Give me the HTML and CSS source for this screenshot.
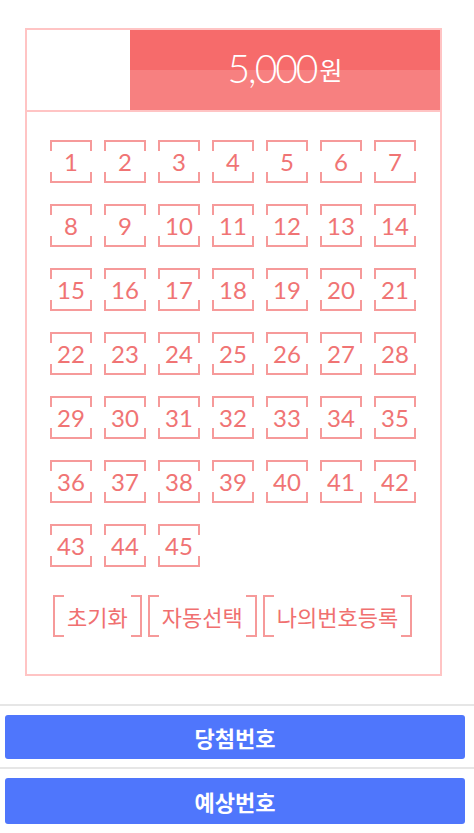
FILE: index.html
```html
<!DOCTYPE html>
<html lang="ko">
<head>
    <meta charset="UTF-8">
    <meta name="viewport" content="width=device-width, initial-scale=1.0">
    <title>로또 번호 선택</title>
    <link rel="stylesheet" href="styles.css">
</head>
<body>

    <div class="ticket">
        <div class="ticket-head">
            <div class="head-blank"></div>
            <div class="head-price"><span class="price-num">5,000</span><span class="price-unit">원</span></div>
        </div>
        <div class="board">
            <div class="num">1</div>
            <div class="num">2</div>
            <div class="num">3</div>
            <div class="num">4</div>
            <div class="num">5</div>
            <div class="num">6</div>
            <div class="num">7</div>
            <div class="num">8</div>
            <div class="num">9</div>
            <div class="num">10</div>
            <div class="num">11</div>
            <div class="num">12</div>
            <div class="num">13</div>
            <div class="num">14</div>
            <div class="num">15</div>
            <div class="num">16</div>
            <div class="num">17</div>
            <div class="num">18</div>
            <div class="num">19</div>
            <div class="num">20</div>
            <div class="num">21</div>
            <div class="num">22</div>
            <div class="num">23</div>
            <div class="num">24</div>
            <div class="num">25</div>
            <div class="num">26</div>
            <div class="num">27</div>
            <div class="num">28</div>
            <div class="num">29</div>
            <div class="num">30</div>
            <div class="num">31</div>
            <div class="num">32</div>
            <div class="num">33</div>
            <div class="num">34</div>
            <div class="num">35</div>
            <div class="num">36</div>
            <div class="num">37</div>
            <div class="num">38</div>
            <div class="num">39</div>
            <div class="num">40</div>
            <div class="num">41</div>
            <div class="num">42</div>
            <div class="num">43</div>
            <div class="num">44</div>
            <div class="num">45</div>
        </div>
        <div class="actions">
            <button class="act">초기화</button>
            <button class="act">자동선택</button>
            <button class="act">나의번호등록</button>
        </div>
    </div>

    <div class="menu">
        <div class="menu-row">
            <button class="menu-btn">당첨번호</button>
        </div>
        <div class="menu-row">
            <button class="menu-btn">예상번호</button>
        </div>
    </div>

</body>
</html>
```

FILE: styles.css
```css
body {
    margin: 0;
    font-family: Lato, "Noto Sans CJK KR", sans-serif;
    background: #fff;
}
.ticket {
    box-sizing: border-box;
    width: 417px;
    margin: 28px 0 0 25px;
    border: 2px solid #ffc4c4;
    padding-bottom: 37px;
}
.ticket-head {
    display: flex;
    height: 80px;
    border-bottom: 2px solid #ffc4c4;
}
.head-blank {
    width: 103px;
}
.head-price {
    flex: 1;
    display: flex;
    align-items: center;
    justify-content: center;
    color: #fff;
    background: linear-gradient(#f66b6b 0, #f66b6b 50%, #f78080 50%, #f78080 100%);
}
.price-num {
    font-family: Lato, sans-serif;
    font-weight: 300;
    font-size: 39px;
    letter-spacing: -2px;
    margin-top: -4px;
}
.price-unit {
    font-family: "Noto Sans CJK KR", sans-serif;
    font-size: 25px;
    margin-left: 3px;
    margin-top: -2px;
}
.board {
    display: grid;
    grid-template-columns: repeat(7, 42px);
    grid-auto-rows: 43px;
    column-gap: 12px;
    row-gap: 21px;
    padding: 28px 0 0 23px;
}
.num {
    box-sizing: border-box;
    display: flex;
    align-items: center;
    justify-content: center;
    border-top: 2px solid #f69a9a;
    border-bottom: 2px solid #f69a9a;
    background:
        linear-gradient(#f69a9a, #f69a9a) left top / 2px 9px no-repeat,
        linear-gradient(#f69a9a, #f69a9a) right top / 2px 9px no-repeat,
        linear-gradient(#f69a9a, #f69a9a) left bottom / 2px 9px no-repeat,
        linear-gradient(#f69a9a, #f69a9a) right bottom / 2px 9px no-repeat;
    color: #f07474;
    font-size: 24px;
    cursor: pointer;
}
.actions {
    display: flex;
    gap: 6px;
    margin: 28px 0 0 26px;
}
.act {
    box-sizing: border-box;
    height: 42px;
    padding: 0 12px;
    border: none;
    border-left: 2px solid #f69a9a;
    border-right: 2px solid #f69a9a;
    background:
        linear-gradient(#f69a9a, #f69a9a) left top / 9px 2px no-repeat,
        linear-gradient(#f69a9a, #f69a9a) right top / 9px 2px no-repeat,
        linear-gradient(#f69a9a, #f69a9a) left bottom / 9px 2px no-repeat,
        linear-gradient(#f69a9a, #f69a9a) right bottom / 9px 2px no-repeat;
    color: #f07070;
    font-family: "Noto Sans CJK KR", sans-serif;
    font-size: 22px;
    cursor: pointer;
}
.menu {
    margin-top: 28px;
}
.menu-row {
    border-top: 2px solid #e6e6e6;
    padding: 9px 9px 8px 5px;
}
.menu-btn {
    display: block;
    width: 100%;
    height: 44px;
    border: none;
    border-radius: 3px;
    background: #4f76fc;
    color: #fff;
    font-family: "Noto Sans CJK KR", sans-serif;
    font-weight: 700;
    font-size: 22px;
    cursor: pointer;
}
.menu-row + .menu-row .menu-btn {
    height: 46px;
}
```
